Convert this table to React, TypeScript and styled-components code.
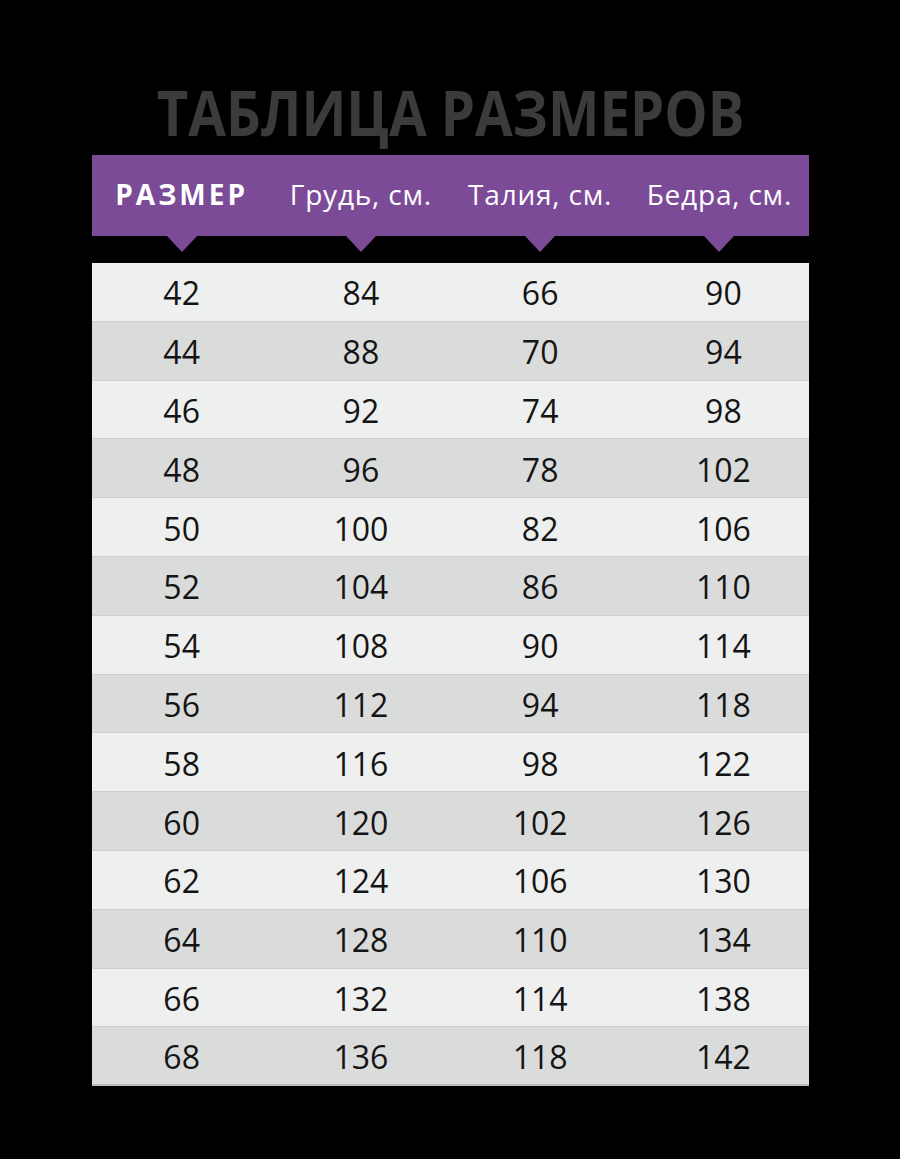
import styled, { createGlobalStyle } from "styled-components";

const GlobalStyle = createGlobalStyle`
    html, body {
        margin: 0;
        padding: 0;
        background: #000;
    }
`;

const header = ["РАЗМЕР", "Грудь, см.", "Талия, см.", "Бедра, см."];

const rows: number[][] = [
    [42, 84, 66, 90],
    [44, 88, 70, 94],
    [46, 92, 74, 98],
    [48, 96, 78, 102],
    [50, 100, 82, 106],
    [52, 104, 86, 110],
    [54, 108, 90, 114],
    [56, 112, 94, 118],
    [58, 116, 98, 122],
    [60, 120, 102, 126],
    [62, 124, 106, 130],
    [64, 128, 110, 134],
    [66, 132, 114, 138],
    [68, 136, 118, 142],
];

const App = () => {
    return (
        <Page>
            <GlobalStyle />
            <Title>ТАБЛИЦА РАЗМЕРОВ</Title>
            <HeaderBar>
                {header.map((label, index) => (
                    <HeaderCell key={index} $bold={index === 0}>
                        {label}
                    </HeaderCell>
                ))}
            </HeaderBar>
            <Table>
                {rows.map((row, index) => (
                    <Row key={index} $dark={index % 2 === 1}>
                        {row.map((value, i) => (
                            <Cell key={i} $shift={i === 3}>
                                {value}
                            </Cell>
                        ))}
                    </Row>
                ))}
            </Table>
        </Page>
    );
};

export default App;

const Page = styled.div`
    width: 900px;
    height: 1159px;
    background: #000;
    box-sizing: border-box;
    padding: 78px 91px 0 92px;
    font-family: "Open Sans", "Noto Sans", sans-serif;
`;

const Title = styled.h1`
    margin: 0;
    height: 77px;
    text-align: center;
    font-size: 62px;
    line-height: 68px;
    font-weight: 700;
    letter-spacing: 0;
    color: #3b3b3b;
    transform: scaleX(0.88);
`;

const HeaderBar = styled.div`
    display: grid;
    grid-template-columns: repeat(4, 1fr);
    height: 81px;
    background: #7c4b98;
    margin-bottom: 27px;
`;

const HeaderCell = styled.div<{ $bold: boolean }>`
    position: relative;
    display: flex;
    align-items: center;
    justify-content: center;
    color: #fff;
    font-size: 28px;
    font-weight: ${(p) => (p.$bold ? 700 : 400)};
    letter-spacing: ${(p) => (p.$bold ? "3px" : "0.8px")};
    padding-bottom: 4px;

    &::after {
        content: "";
        position: absolute;
        left: 50%;
        bottom: -16px;
        margin-left: -15px;
        border-left: 15px solid transparent;
        border-right: 15px solid transparent;
        border-top: 16px solid #7c4b98;
    }
`;

const Table = styled.div`
    display: flex;
    flex-direction: column;
`;

const Row = styled.div<{ $dark: boolean }>`
    display: grid;
    grid-template-columns: repeat(4, 1fr);
    height: 58.8px;
    background: ${(p) => (p.$dark ? "#dadbdb" : "#eeefef")};
    border-bottom: 1px solid #cfcfcf;
    box-sizing: border-box;

    &:last-child {
        border-bottom: 2px solid #bdbdbd;
    }
`;

const Cell = styled.div<{ $shift: boolean }>`
    display: flex;
    align-items: center;
    justify-content: center;
    font-size: 32px;
    color: #141414;
    padding-top: 2px;
    padding-left: ${(p) => (p.$shift ? "8px" : "0")};
`;
